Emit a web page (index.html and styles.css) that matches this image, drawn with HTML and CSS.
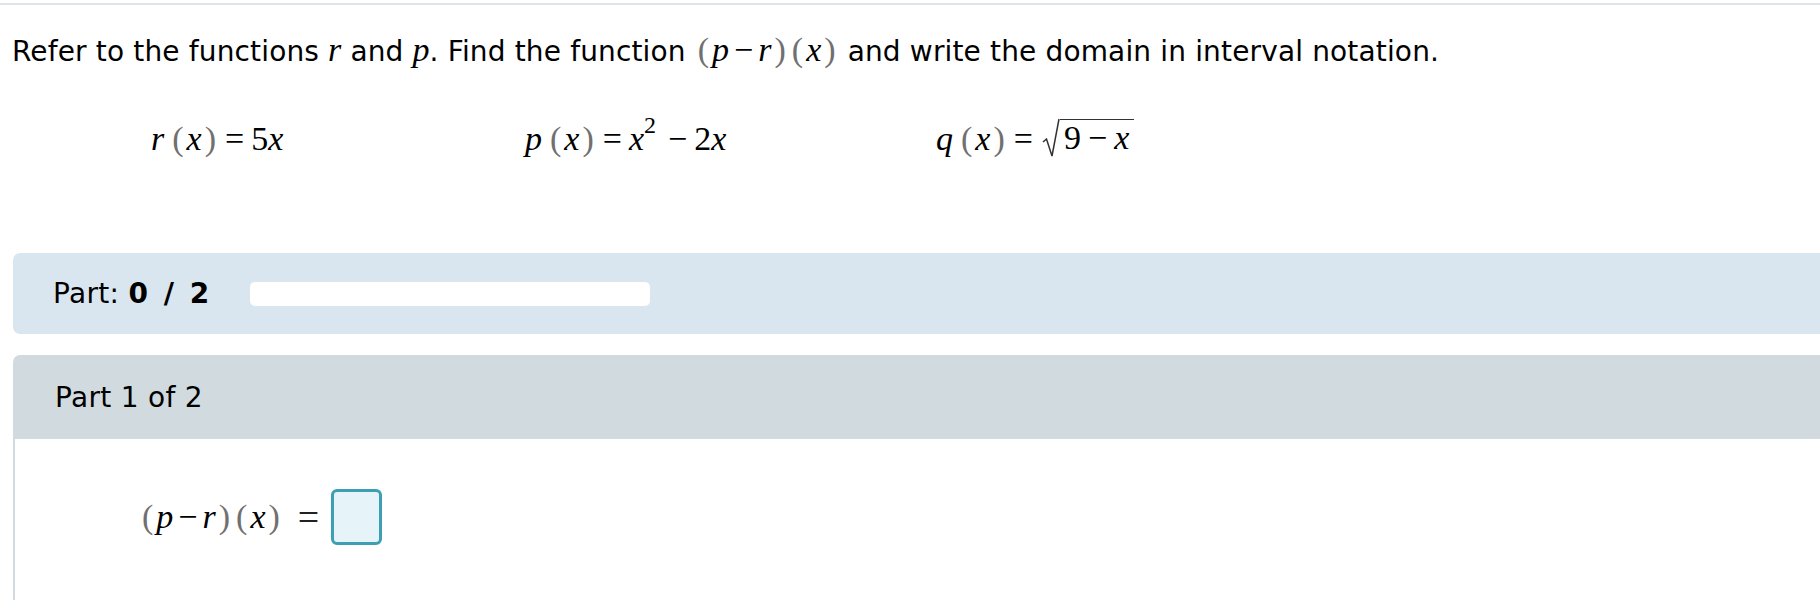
FILE: index.html
```html
<!DOCTYPE html>
<html lang="en">
<head>
<meta charset="utf-8">
<title>Question</title>
<link rel="stylesheet" href="styles.css">
</head>
<body>
<div class="topline"></div>
<div class="question">
  <p class="prompt">Refer to the functions <span class="mi">r</span> and <span class="mi">p</span>. Find the function <span class="math inline"><span class="pr">(</span><span class="mi">p</span><span class="mo">−</span><span class="mi">r</span><span class="pr">)</span><span class="pr">(</span><span class="mi">x</span><span class="pr">)</span></span> and write the domain in interval notation.</p>
  <div class="funcs">
    <div class="math fn"><span class="mi">r</span><span class="gap"></span><span class="pr">(</span><span class="mi">x</span><span class="pr">)</span><span class="eq">=</span><span class="mn">5</span><span class="mi">x</span></div>
    <div class="math fn"><span class="mi">p</span><span class="gap"></span><span class="pr">(</span><span class="mi">x</span><span class="pr">)</span><span class="eq">=</span><span class="mi">x</span><span class="sup">2</span><span class="mo minus">−</span><span class="mn">2</span><span class="mi">x</span></div>
    <div class="math fn"><span class="mi">q</span><span class="gap"></span><span class="pr">(</span><span class="mi">x</span><span class="pr">)</span><span class="eq">=</span><span class="sqrt"><svg class="radical" width="18" height="40" viewBox="0 0 18 40"><polyline points="1,24 4.5,21 10,38 17,1" fill="none" stroke="#333" stroke-width="1.5"/></svg><span class="radicand"><span class="mn">9</span><span class="mo">−</span><span class="mi">x</span></span></span></div>
  </div>
</div>

<div class="part-status">
  <div class="status-label">Part: <b>0 / 2</b></div>
  <div class="progress"></div>
</div>

<div class="part">
  <div class="part-head">Part 1 of 2</div>
  <div class="part-body">
    <div class="equation">
      <span class="math expr"><span class="pr">(</span><span class="mi">p</span><span class="mo">−</span><span class="mi">r</span><span class="pr">)</span><span class="pr">(</span><span class="mi">x</span><span class="pr">)</span></span>
      <span class="equals">=</span>
      <span class="answer-box"></span>
    </div>
  </div>
</div>
</body>
</html>
```

FILE: styles.css
```css
html, body {
  margin: 0;
  padding: 0;
  background: #ffffff;
  overflow: hidden;
}

body {
  font-family: "DejaVu Sans", Verdana, sans-serif;
  color: #000;
  width: 1820px;
  height: 600px;
}

.topline {
  margin-top: 3px;
  height: 2px;
  background: #e0e5e9;
}

.question {
  padding-left: 12px;
}

.prompt {
  margin: 27px 0 0 0;
  font-size: 28px;
  letter-spacing: 0.15px;
  line-height: 36px;
  white-space: nowrap;
}

.prompt .mi {
  letter-spacing: 0;
}

.math {
  font-family: "Liberation Serif", "Times New Roman", serif;
  font-size: 34px;
  white-space: nowrap;
  letter-spacing: 0;
}

.mi {
  font-family: "Liberation Serif", "Times New Roman", serif;
  font-style: italic;
  font-size: 34px;
}

.mn {
  font-family: "Liberation Serif", "Times New Roman", serif;
  font-style: normal;
}

.mo {
  margin: 0 5px;
}

.pr {
  color: #707070;
  font-family: "Liberation Serif", serif;
  margin: 0 3px;
}

.funcs {
  margin-top: 47px;
  padding-left: 139px;
  display: grid;
  grid-template-columns: 374px 411px auto;
  height: 44px;
  align-items: center;
}

.fn {
  line-height: 44px;
  display: flex;
  align-items: center;
}

.gap {
  display: inline-block;
  width: 5px;
}

.eq {
  margin: 0 7px 0 6px;
}

.sup {
  font-family: "Liberation Serif", serif;
  font-size: 24px;
  position: relative;
  top: -14px;
  margin-left: 0;
}

.minus {
  margin: 0 7px 0 12px;
}

.sqrt {
  display: inline-flex;
  align-items: flex-end;
  margin-left: 2px;
}

.radical {
  display: block;
  margin-bottom: 2px;
}

.radicand {
  border-top: 1.5px solid #333;
  line-height: 36px;
  padding: 0 5px 0 4px;
  margin-bottom: 4px;
}

.radicand .mo {
  margin: 0 7px;
}

.part-status {
  margin-top: 92px;
  margin-left: 13px;
  height: 81px;
  background: #d9e6ef;
  border-radius: 7px 0 0 7px;
  display: flex;
  align-items: center;
  padding-left: 40px;
  font-size: 28px;
}

.status-label {
  width: 197px;
  white-space: nowrap;
  letter-spacing: 0.3px;
}

.status-label b {
  font-weight: bold;
  word-spacing: 4px;
  letter-spacing: 1px;
}

.progress {
  width: 400px;
  height: 24px;
  background: #ffffff;
  border-radius: 5px;
}

.part {
  margin-top: 21px;
  margin-left: 13px;
}

.part-head {
  height: 84px;
  background: #d1dadf;
  border-radius: 7px 0 0 0;
  display: flex;
  align-items: center;
  padding-left: 42px;
  font-size: 28px;
  letter-spacing: 0.3px;
}

.part-body {
  border-left: 2px solid #d1dadf;
  height: 200px;
  padding-top: 50px;
  box-sizing: border-box;
}

.equation {
  padding-left: 124px;
  display: flex;
  align-items: center;
  height: 56px;
}

.expr {
  line-height: 44px;
}

.equals {
  font-family: "Liberation Serif", serif;
  font-size: 38px;
  margin: 0 12px 0 15px;
  color: #222;
}

.answer-box {
  width: 51px;
  height: 56px;
  box-sizing: border-box;
  border: 3px solid #3d9fb3;
  background: #e6f4f9;
  border-radius: 6px;
}
```
